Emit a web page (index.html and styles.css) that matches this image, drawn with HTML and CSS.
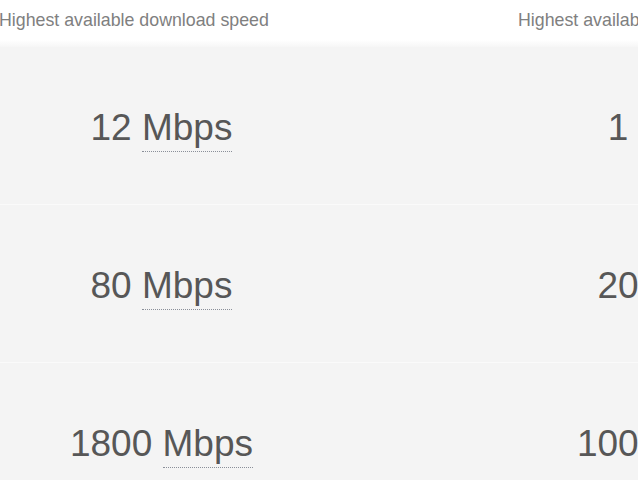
FILE: index.html
```html
<!DOCTYPE html>
<html>
<head>
<meta charset="utf-8">
<link rel="stylesheet" href="styles.css">
</head>
<body>
<div class="table">
  <div class="head">
    <div class="hcell hcell-a">Highest available download speed</div>
    <div class="hcell hcell-b">Highest available download speed</div>
  </div>
  <div class="row">
    <div class="cell">12 <abbr class="unit" title="Megabits per second">Mbps</abbr></div>
    <div class="cell">1 <abbr class="unit" title="Megabits per second">Mbps</abbr></div>
  </div>
  <div class="row">
    <div class="cell">80 <abbr class="unit" title="Megabits per second">Mbps</abbr></div>
    <div class="cell">20 <abbr class="unit" title="Megabits per second">Mbps</abbr></div>
  </div>
  <div class="row">
    <div class="cell">1800 <abbr class="unit" title="Megabits per second">Mbps</abbr></div>
    <div class="cell">1000 <abbr class="unit" title="Megabits per second">Mbps</abbr></div>
  </div>
</div>
</body>
</html>
```
FILE: styles.css
```css
html, body {
  margin: 0;
  padding: 0;
  background: #f4f4f4;
  overflow: hidden;
  font-family: "Liberation Sans", Arial, sans-serif;
}
.table {
  width: 1014px;
  margin-left: -92px;
}
.head {
  display: grid;
  grid-template-columns: 507px 507px;
  height: 47px;
  background: linear-gradient(#ffffff 0, #ffffff 40px, #f6f6f6 47px);
}
.hcell {
  font-size: 17.8px;
  color: #808080;
  padding-top: 9px;
  line-height: 22px;
  white-space: nowrap;
}
.hcell-a { padding-left: 91px; }
.hcell-b { padding-left: 103px; }
.row {
  display: grid;
  grid-template-columns: 507px 507px;
  height: 157px;
  border-bottom: 1px solid #fafafa;
  background: #f4f4f4;
}
.cell {
  text-align: center;
  font-size: 37px;
  color: #575757;
  padding-top: 63px;
  line-height: 36px;
  white-space: nowrap;
}
.unit {
  text-decoration: none;
  border-bottom: 1px dotted #8a8f99;
  padding-bottom: 3px;
}
```
